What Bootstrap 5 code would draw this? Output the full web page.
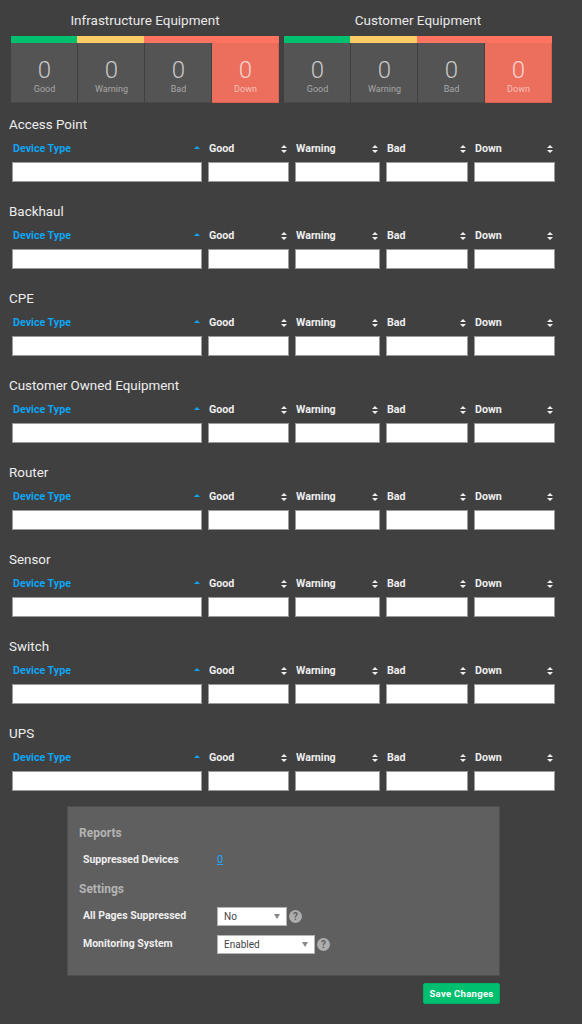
<!DOCTYPE html>
<html lang="en"><head><meta charset="utf-8">
<link href="https://cdn.jsdelivr.net/npm/bootstrap@5.3.0/dist/css/bootstrap.min.css" rel="stylesheet">
<style>
html,body{height:1024px;overflow:hidden}
body{background:#404040;font-family:Roboto,sans-serif;color:#eee;font-size:11px}
.page-wrap{padding:12px 0 0 0;width:582px}
.stat-row{padding-left:11px;gap:5px}
.stat-panel{width:268px}
.stat-title{font-size:13.5px;line-height:17px;text-align:center;color:#e8e8e8;margin:0 0 7px;font-weight:400}
.stat-bar{height:7px}
.bar-g{width:66px;background:#00bf6f}.bar-y{width:67px;background:#ffcc66}.bar-r{flex:1;background:#ff7460}
.stat-tile{width:67px;height:60px;background:#545454;text-align:center;border-right:1px solid #404040;border-bottom:1px solid #4a4a4a;padding:14px 0 0 1px}
.stat-tile.tile-down{background:#ec6f5e;border-right:1px solid #d9604f;border-bottom:1px solid #d9604f;color:#f5c9c2}
.stat-num{font-size:24px;line-height:26px;font-weight:300;color:#c8c8c8}
.tile-down .stat-num{color:#f7d4ce}
.stat-lbl{font-size:9px;line-height:10px;margin-top:1px;color:#a8a8a8}
.tile-down .stat-lbl{color:#f5c0b8}
.eq-sec{height:87px;padding:.5px 0 0 9px}
.eq-sec:last-of-type{height:83px}
.eq-first{margin-top:11px}
.eq-name{font-size:13.4px;line-height:20px;font-weight:400;margin:0;color:#eee}
.eq-grid{display:grid;grid-template-columns:190px 81px 85px 82px 81px;column-gap:6px;padding-left:3px}
.eq-head{font-size:10.7px;line-height:14px;font-weight:700;color:#eee;padding:7px 2px 0 1px;height:27.5px}
.eq-head.sorted{color:#0ea5f5}
.eq-head svg{margin-top:3px}
.eq-cell{height:20px;background:#fff;border:1px solid #9a9a9a}
.rep-panel{width:433px;height:170px;margin:0 0 0 67px;background:#5f5f5f;border:1px solid #4f4f4f;padding:19px 10px 0 11px}
.rep-h{font-size:12px;line-height:14px;font-weight:700;color:#b4b4b4;margin:0}
.rep-gap1{margin-top:12px}.rep-gap2{margin-top:13px}.rep-gap3{margin-top:11px}.rep-gap4{margin-top:9px}
.rep-row{padding-left:4px;align-items:center}
.rep-lbl{width:134px;font-size:10.5px;font-weight:700;color:#eee;line-height:14px}
.rep-link{color:#1ea7fd;font-size:11px}
.sel-box{height:19px;background:#fff;border:1px solid #b5b5b5;color:#444;font-size:10px;padding:0 6px;justify-content:space-between;align-items:center}
.sel-no{width:70px}.sel-en{width:98px}
.sel-arrow{width:0;height:0;border-left:3px solid transparent;border-right:3px solid transparent;border-top:5px solid #888}
.help-i{width:13px;height:13px;border-radius:50%;background:#adadad;color:#5f5f5f;font-size:10px;font-weight:700;line-height:13px;text-align:center;margin-left:2px}
.save-btn{background:#00bf6f;border:1px solid #00b066;color:#fff;font-size:9.5px;font-weight:700;letter-spacing:.3px;width:77px;height:21px;padding:0;border-radius:2px;line-height:19px;margin:7px 0 0 423px;display:block}
</style></head><body>
<div class="page-wrap">
<div class="d-flex stat-row">
 <div class="stat-panel">
  <h2 class="stat-title">Infrastructure Equipment</h2>
  <div class="d-flex stat-bar"><div class="bar-g"></div><div class="bar-y"></div><div class="bar-r"></div></div>
  <div class="d-flex">
   <div class="stat-tile"><div class="stat-num">0</div><div class="stat-lbl">Good</div></div>
   <div class="stat-tile"><div class="stat-num">0</div><div class="stat-lbl">Warning</div></div>
   <div class="stat-tile"><div class="stat-num">0</div><div class="stat-lbl">Bad</div></div>
   <div class="stat-tile tile-down"><div class="stat-num">0</div><div class="stat-lbl">Down</div></div>
  </div>
 </div>
 <div class="stat-panel">
  <h2 class="stat-title">Customer Equipment</h2>
  <div class="d-flex stat-bar"><div class="bar-g"></div><div class="bar-y"></div><div class="bar-r"></div></div>
  <div class="d-flex">
   <div class="stat-tile"><div class="stat-num">0</div><div class="stat-lbl">Good</div></div>
   <div class="stat-tile"><div class="stat-num">0</div><div class="stat-lbl">Warning</div></div>
   <div class="stat-tile"><div class="stat-num">0</div><div class="stat-lbl">Bad</div></div>
   <div class="stat-tile tile-down"><div class="stat-num">0</div><div class="stat-lbl">Down</div></div>
  </div>
 </div>
</div>
<div id="secs" class="eq-first"></div>
<div class="rep-panel">
 <h3 class="rep-h">Reports</h3>
 <div class="d-flex rep-row rep-gap1"><div class="rep-lbl">Suppressed Devices</div><a class="rep-link" href="#">0</a></div>
 <h3 class="rep-h rep-gap2">Settings</h3>
 <div class="d-flex rep-row rep-gap3"><div class="rep-lbl">All Pages Suppressed</div><div class="d-flex sel-box sel-no"><span>No</span><span class="sel-arrow"></span></div><div class="help-i">?</div></div>
 <div class="d-flex rep-row rep-gap4"><div class="rep-lbl">Monitoring System</div><div class="d-flex sel-box sel-en"><span>Enabled</span><span class="sel-arrow"></span></div><div class="help-i">?</div></div>
</div>
<button class="btn save-btn" type="button">Save Changes</button>
</div>
<script>
const both='<svg width="6" height="8" viewBox="0 0 6 8"><path d="M3 0l3 3H0zM3 8L0 5h6z" fill="#eee"/></svg>';
const up='<svg width="6" height="8" viewBox="0 0 6 8"><path d="M3 1l3 3H0z" fill="#0ea5f5"/></svg>';
const names=['Access Point','Backhaul','CPE','Customer Owned Equipment','Router','Sensor','Switch','UPS'];
document.getElementById('secs').innerHTML=names.map(n=>`<section class="eq-sec"><h3 class="eq-name">${n}</h3><div class="eq-grid">
<div class="eq-head sorted d-flex justify-content-between"><span>Device Type</span>${up}</div>
${['Good','Warning','Bad','Down'].map(h=>`<div class="eq-head d-flex justify-content-between"><span>${h}</span>${both}</div>`).join('')}
${'<div class="eq-cell"></div>'.repeat(5)}</div></section>`).join('');
</script>
<script src="https://cdn.jsdelivr.net/npm/bootstrap@5.3.0/dist/js/bootstrap.bundle.min.js"></script>
</body></html>
